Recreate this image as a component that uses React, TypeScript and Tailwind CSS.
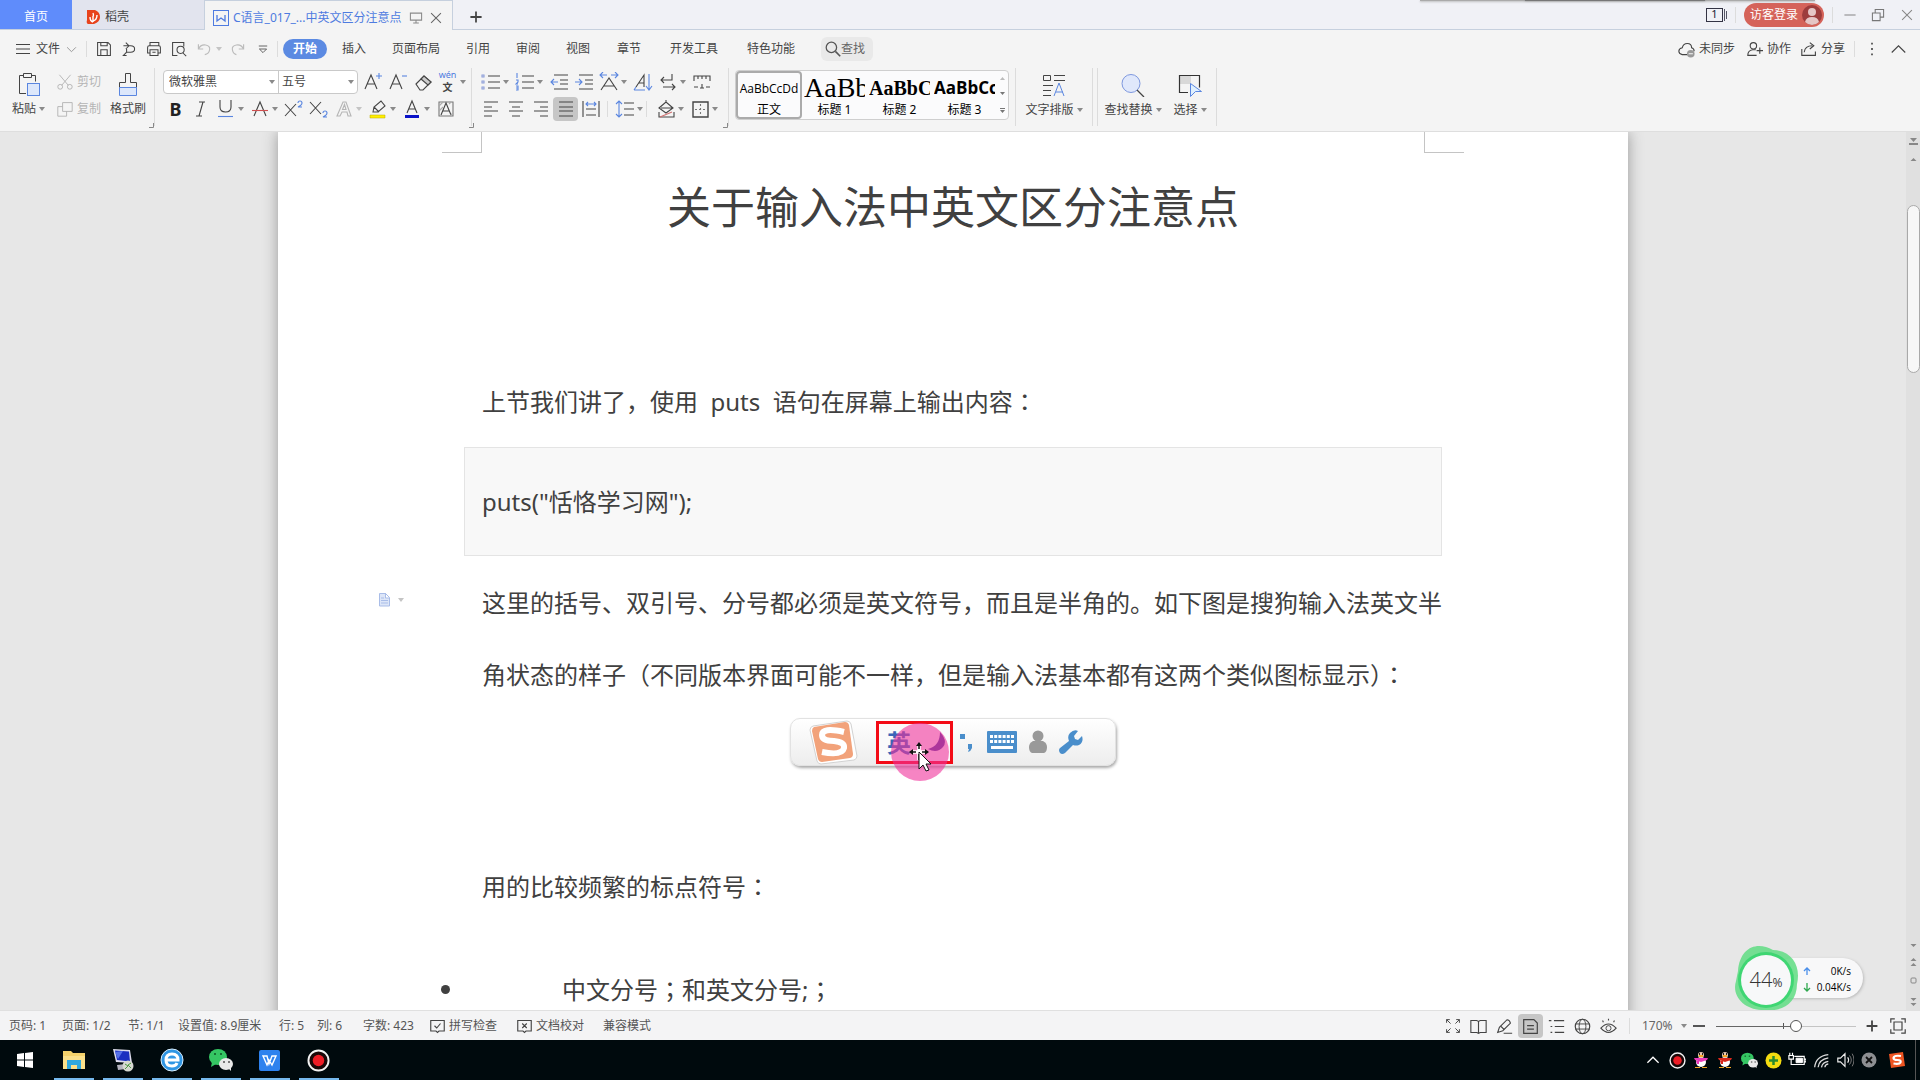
import React from 'react';

interface IconProps {
  children: React.ReactNode;
  size?: number;
  color?: string;
}

// Every line icon is drawn on a 20x20 grid
const Icon = ({ children, size = 20, color = '#444' }: IconProps) => (
  <svg
    width={size}
    height={size}
    viewBox="0 0 20 20"
    fill="none"
    stroke={color}
    strokeWidth="1.1"
    className="shrink-0"
    aria-hidden="true"
  >
    {children}
  </svg>
);

const Caret = ({ light }: { light?: boolean }) => (
  <svg width="6" height="4" viewBox="0 0 6 4" className="shrink-0" aria-hidden="true">
    <path d="M0 0h6L3 4z" fill={light ? '#c4c4c4' : '#8a8a8a'} />
  </svg>
);

interface ToolProps {
  label: string;
  children: React.ReactNode;
  caret?: boolean;
  active?: boolean;
  disabled?: boolean;
}

const Tool = ({ label, children, caret, active, disabled }: ToolProps) => (
  <button
    aria-label={label}
    disabled={disabled}
    className={`flex h-6 shrink-0 items-center ${caret ? 'w-[34px]' : 'w-[25px]'}`}
  >
    <span
      className={`flex h-6 w-[25px] items-center justify-center rounded-sm ${active ? 'bg-[#c6c6c6]' : ''}`}
    >
      {children}
    </span>
    {caret && <Caret light={disabled} />}
  </button>
);

const Divider = ({ tall }: { tall?: boolean }) => (
  <div className={`w-px shrink-0 bg-[#dcdcdc] ${tall ? 'h-[58px]' : 'h-4'}`} />
);

const BLUE = '#5a86e0';

const menus = [
  { name: '插入', width: 'w-[50px]' },
  { name: '页面布局', width: 'w-[74px]' },
  { name: '引用', width: 'w-[50px]' },
  { name: '审阅', width: 'w-[50px]' },
  { name: '视图', width: 'w-[50px]' },
  { name: '章节', width: 'w-[52px]' },
  { name: '开发工具', width: 'w-[78px]' },
  { name: '特色功能', width: 'w-[76px]' },
];

const TabBar = () => (
  <header className="relative flex h-[30px] shrink-0 border-b border-[#c6d0de] bg-[#f0f1f6]">
    <button className="w-[72px] bg-[#5f8cfb] pt-1 text-white">首页</button>
    <button className="flex w-[132px] items-center gap-1 bg-[#e2e4ee] pt-1 pl-[14px]">
      <svg width="15" height="16" viewBox="0 0 15 16" aria-hidden="true">
        <path d="M1 1l8 0q5 2 5 7t-6 7l-6 0q-2-1-1-4z" fill="#e8431c" />
        <path d="M7 13V7M7 13q-3-1-3-5M7 12q4-1 4-6M7 8q1-2 0-4" stroke="#fff" strokeWidth="1.4" fill="none" />
      </svg>
      稻壳
    </button>
    <div className="-mb-px flex w-[249px] items-center border-x border-t border-[#c6d0de] bg-[#f4f4f4] pt-1 pl-[8px] text-[#4e7be0]">
      <svg width="16" height="16" viewBox="0 0 16 16" fill="none" stroke="#4e7be0" aria-hidden="true">
        <rect x="0.5" y="0.5" width="15" height="15" />
        <path d="M4 5v6l4-3 4 3V5" strokeWidth="1.3" />
      </svg>
      <span className="ml-1 w-[170px] whitespace-nowrap">C语言_017_...中英文区分注意点</span>
      <button aria-label="窗口" className="ml-[6px]">
        <Icon size={14} color="#8a8a8a">
          <path d="M2 3h16v10H2zM10 13v4M6 17h8" strokeWidth="1.5" />
        </Icon>
      </button>
      <button aria-label="关闭标签" className="ml-[6px]">
        <Icon size={14} color="#666">
          <path d="M3 3l14 14M17 3L3 17" strokeWidth="1.5" />
        </Icon>
      </button>
    </div>
    <button aria-label="新建标签" className="ml-[15px] pt-1">
      <Icon size={16}>
        <path d="M10 3v14M3 10h14" strokeWidth="2.2" />
      </Icon>
    </button>

    <div className="ml-auto flex items-center">
      <button aria-label="窗口列表" className="mr-2 flex items-center">
        <span className="flex h-[14px] w-[17px] items-center justify-center border border-[#334] text-[11px] text-[#223]">1</span>
        <span className="ml-px h-3 w-px bg-[#556]" />
        <span className="ml-px h-2 w-px bg-[#556]" />
      </button>
      <Divider />
      <button className="mx-2 flex h-6 w-20 items-center justify-between rounded-full bg-[#d5635a] pr-[2px] pl-[6px] text-white">
        访客登录
        <svg width="20" height="20" viewBox="0 0 20 20" aria-hidden="true">
          <circle cx="10" cy="10" r="10" fill="#9c3c3c" />
          <circle cx="10" cy="7" r="4" fill="#e5c5c5" />
          <path d="M3 17q1-5 7-5t7 5q-3 3-7 3t-7-3z" fill="#e5c5c5" />
        </svg>
      </button>
      <Divider />
      <button aria-label="最小化" className="ml-[5px] flex w-6 justify-center">
        <Icon size={14} color="#888"><path d="M2 10h16" strokeWidth="1.5" /></Icon>
      </button>
      <button aria-label="还原" className="flex w-8 justify-center">
        <Icon size={14} color="#777"><path d="M2 7h11v11H2zM6 7V2h12v11h-5" strokeWidth="1.5" /></Icon>
      </button>
      <button aria-label="关闭" className="flex w-[26px] justify-center">
        <Icon size={14} color="#888"><path d="M3 3l14 14M17 3L3 17" strokeWidth="1.5" /></Icon>
      </button>
    </div>
    {/* Edge of the recorder toolbar hanging off the top of the screen */}
    <div className="absolute top-0 right-[105px] h-px w-[395px] bg-[#aaa] shadow-[0_1px_2px_#aaa]" />
    <div className="absolute top-0 right-[215px] h-px w-[180px] bg-[#777] shadow-[0_0_2px_#777]" />
  </header>
);

const MenuBar = () => (
  <nav className="flex h-[38px] shrink-0 items-center">
    <button className="flex w-[86px] items-center gap-[6px] pl-4">
      <svg width="14" height="12" viewBox="0 0 14 12" stroke="#444" aria-hidden="true">
        <path d="M0 1.5h14M0 6h14M0 10.5h14" />
      </svg>
      文件
      <Icon size={11} color="#999"><path d="M2 6l8 8 8-8" strokeWidth="1.8" /></Icon>
    </button>
    <Divider />
    <div className="flex w-[190px] items-center pl-1">
      <Tool label="保存">
        <Icon size={16}><path d="M2 2h13l3 3v13H2zM6 2v4h8V2M6 18v-7h8v7" strokeWidth="1.3" /></Icon>
      </Tool>
      <Tool label="输出">
        <Icon size={16}><path d="M3 6h9q5 0 5 4t-5 4H7M6 2l4 4-4 4M7 10v4l-4 4h4" strokeWidth="1.3" /></Icon>
      </Tool>
      <Tool label="打印">
        <Icon size={16}><path d="M5 6V2h11v4M5 15H2V8q0-2 2-2h12q2 0 2 2v7h-3M5 11h10v7H5zM8 14h4" strokeWidth="1.3" /></Icon>
      </Tool>
      <Tool label="打印预览">
        <Icon size={16}><path d="M8 18H2V2h14v5M15 15l4 4" strokeWidth="1.3" /><circle cx="12" cy="11" r="4.5" strokeWidth="1.3" /></Icon>
      </Tool>
      <Tool label="撤销" caret disabled>
        <Icon size={16} color="#bbb"><path d="M3 4v6h6M3 10q3-6 9-5t5 6-6 6" strokeWidth="1.4" /></Icon>
      </Tool>
      <Tool label="恢复" disabled>
        <Icon size={16} color="#bbb"><path d="M17 4v6h-6M17 10q-3-6-9-5t-5 6 5 6" strokeWidth="1.4" /></Icon>
      </Tool>
      <Tool label="自定义">
        <Icon size={12} color="#555"><path d="M3 5h14M4 10l6 6 6-6z" strokeWidth="1.5" /></Icon>
      </Tool>
    </div>
    <Divider />
    <button className="mr-[2px] ml-[5px] h-5 w-11 rounded-full bg-[#5b8ae2] font-bold text-white">开始</button>
    {menus.map((menu) => (
      <button key={menu.name} className={`shrink-0 ${menu.width}`}>
        {menu.name}
      </button>
    ))}
    <label className="ml-3 flex h-6 w-[52px] items-center rounded-md bg-[#e9e9e9] pl-1">
      <Icon size={16} color="#555"><circle cx="8" cy="8" r="6.5" strokeWidth="1.6" /><path d="M13 13l6 6" strokeWidth="2" /></Icon>
      <input aria-label="查找" placeholder="查找" className="w-7 bg-transparent outline-none placeholder:text-[#666]" />
    </label>

    <div className="ml-auto flex items-center">
      <button className="flex items-center gap-1">
        <Icon size={17}>
          <path d="M11 16H5q-4-1-4-4t4-4q1-5 6-5t5 5q3 1 3 4" strokeWidth="1.3" />
          <circle cx="15" cy="15" r="4.5" fill="#999" stroke="none" />
          <path d="M12.500 15h5" stroke="#fff" />
        </Icon>
        未同步
      </button>
      <button className="ml-3 flex items-center gap-1">
        <Icon size={16}>
          <circle cx="8" cy="6" r="4" strokeWidth="1.4" />
          <path d="M12 18H1q0-6 6-7h4M16 8v8M12 12h8" strokeWidth="1.4" />
        </Icon>
        协作
      </button>
      <button className="ml-[10px] flex items-center gap-1">
        <Icon size={16}><path d="M1 10v8h17v-5M4 14q1-8 10-8M11 2l5 4-5 4" strokeWidth="1.4" /></Icon>
        分享
      </button>
      <span className="ml-[9px]"><Divider /></span>
      <button aria-label="更多" className="ml-2">
        <Icon size={18} color="none">
          <path d="M9 3h2v2H9zM9 9h2v2H9zM9 15h2v2H9z" fill="#555" />
        </Icon>
      </button>
      <button aria-label="折叠功能区" className="mr-[14px] ml-[10px]">
        <Icon size={15}><path d="M1 14l9-9 9 9" strokeWidth="1.5" /></Icon>
      </button>
    </div>
  </nav>
);

const Corner = () => (
  <svg width="5" height="5" viewBox="0 0 5 5" className="shrink-0 self-end" aria-hidden="true">
    <path d="M4.500 0v4.500H0" stroke="#888" fill="none" />
  </svg>
);

const styleSamples = [
  { name: '标题 1', sample: 'AaBb', look: 'font-[Liberation_Serif] text-[28px]' },
  { name: '标题 2', sample: 'AaBbC', look: 'font-[Liberation_Serif] text-[20px] font-bold' },
  { name: '标题 3', sample: 'AaBbCc', look: 'font-[Open_Sans] text-[17px] font-bold' },
];

const Ribbon = () => (
  <div className="flex h-16 shrink-0 items-start border-b border-[#dedede]">
    {/* Clipboard */}
    <div className="flex h-[60px] w-[154px] shrink-0">
      <button className="flex w-[57px] flex-col items-center gap-1 pt-1">
        <svg width="22" height="25" viewBox="0 0 22 25" fill="none" stroke="#444" aria-hidden="true">
          <path d="M8 21.500H1.500V3.500h4M13 3.500h4.500v6M5.500 1.500h8v4h-8z" />
          <rect x="9.500" y="11.500" width="12" height="12" fill="#dce7fb" stroke={BLUE} />
        </svg>
        <span className="flex items-center gap-[3px] leading-4">粘贴<Caret /></span>
      </button>
      <div className="flex w-[50px] flex-col gap-[3px] pt-[2px]">
        <button disabled className="flex h-6 items-center gap-1 text-[#b4b4b4]">
          <Icon size={16} color="#b0b0b0"><circle cx="4" cy="16" r="3" /><circle cx="16" cy="16" r="3" /><path d="M3 1l11 13M17 1L6 14" /></Icon>
          剪切
        </button>
        <button disabled className="flex h-6 items-center gap-1 text-[#b4b4b4]">
          <Icon size={16} color="#b0b0b0"><path d="M7 2h12v11H7zM7 7H1v12h11v-6" /></Icon>
          复制
        </button>
      </div>
      <button className="flex flex-1 flex-col items-center gap-1 pt-1">
        <svg width="20" height="25" viewBox="0 0 20 25" fill="none" stroke="#444" aria-hidden="true">
          <path d="M7.500 1.500h5v9h6v5h-17v-5h6z" />
          <path d="M1.500 15.500h17v8h-17z" fill="#dce7fb" stroke={BLUE} />
        </svg>
        <span className="leading-4">格式刷</span>
      </button>
      <Corner />
    </div>
    <Divider tall />

    {/* Font */}
    <div className="flex h-[60px] w-[316px] shrink-0">
      <div className="flex flex-1 flex-col gap-[3px] pt-[2px] pl-2">
        <div className="flex items-center">
          <div className="mr-[2px] flex h-6 w-[195px] items-center rounded-sm border border-[#c9c9c9] bg-white">
            <select aria-label="字体" className="w-[105px] appearance-none pl-[5px] outline-none">
              <option>微软雅黑</option>
            </select>
            <Caret />
            <select aria-label="字号" className="ml-[3px] h-full w-[70px] appearance-none border-l border-[#c9c9c9] pl-[3px] outline-none">
              <option>五号</option>
            </select>
            <Caret />
          </div>
          <Tool label="增大字号">
            <Icon><path d="M2 17L8 3l6 14M4 12h8" /><path d="M16 1v6M13 4h6" stroke={BLUE} /></Icon>
          </Tool>
          <Tool label="减小字号">
            <Icon><path d="M2 17L8 3l6 14M4 12h8" /><path d="M14 4h5" stroke={BLUE} /></Icon>
          </Tool>
          <Tool label="清除格式">
            <Icon><path d="M3 12l8-8 7 6-8 8H7z" /><path d="M8 7l7 6 3-3-7-6z" fill="#ccc" /></Icon>
          </Tool>
          <Tool label="拼音指南" caret>
            <span className="flex flex-col items-center">
              <span className="text-[9px] leading-[10px] text-[#4e7be0]">wén</span>
              <span className="text-[10px] leading-[14px] font-bold">文</span>
            </span>
          </Tool>
        </div>
        <div className="flex items-center">
          <Tool label="加粗"><span className="text-[18px] leading-6 font-bold text-[#222]">B</span></Tool>
          <Tool label="倾斜"><Icon><path d="M8 3h6M5 17h6M12 3L8 17" /></Icon></Tool>
          <Tool label="下划线" caret>
            <Icon><path d="M4 1v7q0 5 5.500 5T15 8V1" /><path d="M2 17.500h15" stroke={BLUE} /></Icon>
          </Tool>
          <Tool label="删除线" caret>
            <Icon><path d="M4 17l6-14 6 14" /><path d="M2 11.500h16" stroke="#d05050" /></Icon>
          </Tool>
          <Tool label="上标">
            <Icon><path d="M1 5l11 12M12 5L1 17" /><path d="M14 4q0-2 2-2t2 2-4 4h4" stroke={BLUE} /></Icon>
          </Tool>
          <Tool label="下标">
            <Icon><path d="M1 3l11 12M12 3L1 15" /><path d="M14 14q0-2 2-2t2 2-4 4h4" stroke={BLUE} /></Icon>
          </Tool>
          <Tool label="文字效果" caret disabled>
            <Icon color="#b5b5b5"><path d="M3 17L9 3h3l5 14h-3l-1-4H8l-2 4zM8.500 10.500h3.500l-1.500-5z" /></Icon>
          </Tool>
          <Tool label="突出显示" caret>
            <Icon><path d="M5 13l1-5 7-6 4 5-7 6zM6 8l5 5" /><path d="M2 16h15v3H2z" fill="#ffee00" stroke="#bba800" strokeWidth="0.500" /></Icon>
          </Tool>
          <Tool label="字体颜色" caret>
            <Icon><path d="M5 14l5-12 5 12M6.500 10h7" /><path d="M3 16h14v3H3z" fill="#0a12c8" stroke="none" /></Icon>
          </Tool>
          <Tool label="字符底纹">
            <Icon><path d="M3 3h14v14H3z" stroke="#777" /><path d="M5 16l5-12 5 12M7 12h6" /><path d="M3 7l4-4M3 12l4-4M13 5l2-2M14 17l3-3" stroke="#aaa" /></Icon>
          </Tool>
        </div>
      </div>
      <Corner />
    </div>
    <Divider tall />

    {/* Paragraph */}
    <div className="flex h-[60px] w-[256px] shrink-0">
      <div className="flex flex-1 flex-col gap-[3px] pt-[2px] pl-[6px]">
        <div className="flex items-center">
          <Tool label="项目符号" caret>
            <Icon><path d="M7 4h12M7 10h12M7 16h12" /><path d="M1 3h2v2H1zM1 9h2v2H1zM1 15h2v2H1z" stroke="#8a9cd8" /></Icon>
          </Tool>
          <Tool label="编号" caret>
            <Icon><path d="M7 4h12M7 10h12M7 16h12" /><path d="M2 1v5M1 8h2v2l-2 2h2M1 14h2v4H1M1 16h2" stroke={BLUE} /></Icon>
          </Tool>
          <Tool label="减少缩进">
            <Icon><path d="M5 3h14M11 8h8M11 12h8M5 17h14" /><path d="M9 10H2M5 7l-3 3 3 3" stroke={BLUE} /></Icon>
          </Tool>
          <Tool label="增加缩进">
            <Icon><path d="M5 3h14M11 8h8M11 12h8M5 17h14" /><path d="M1 10h7M5 7l3 3-3 3" stroke={BLUE} /></Icon>
          </Tool>
          <Tool label="中文版式" caret>
            <Icon><path d="M2 18l8-12 8 12M5 14h10" /><path d="M8 3H1M4 0L1 3l3 3M12 3h7M16 0l3 3-3 3" stroke={BLUE} /></Icon>
          </Tool>
          <Tool label="排序">
            <Icon><path d="M3 15L11 3v12M6 11h5" /><path d="M1 18h11M16 2v15M13 14l3 4 3-4M3 15l-2 3" stroke={BLUE} /></Icon>
          </Tool>
          <Tool label="显示标记" caret>
            <Icon><path d="M14 2v6H3M6 5L3 8l3 3M5 15h12M14 12l3 3-3 3" /></Icon>
          </Tool>
          <Tool label="制表位">
            <Icon><path d="M2 9V4h16v5M6 4v3M10 4v3M14 4v3M2 15h4M10 12v4M8 16h4M14 15h4" /></Icon>
          </Tool>
        </div>
        <div className="flex items-center">
          <Tool label="左对齐"><Icon><path d="M3 3h14M3 8h8M3 12h14M3 17h8" /></Icon></Tool>
          <Tool label="居中"><Icon><path d="M3 3h14M6 8h8M3 12h14M6 17h8" /></Icon></Tool>
          <Tool label="右对齐"><Icon><path d="M3 3h14M9 8h8M3 12h14M9 17h8" /></Icon></Tool>
          <Tool label="两端对齐" active><Icon><path d="M3 3h14M3 8h14M3 12h14M3 17h14" /></Icon></Tool>
          <Tool label="分散对齐">
            <Icon><path d="M2 2v16M18 2v16M5 10h10M5 16h10" /><path d="M5 5h10M7 3L5 5l2 2M13 3l2 2-2 2" stroke={BLUE} /></Icon>
          </Tool>
          <span className="mx-1"><Divider /></span>
          <Tool label="行距" caret>
            <Icon><path d="M9 4h10M9 10h10M9 16h10" /><path d="M4 2v16M1 5l3-3 3 3M1 15l3 3 3-3" stroke={BLUE} /></Icon>
          </Tool>
          <span className="mr-[6px]"><Divider /></span>
          <Tool label="底纹" caret>
            <Icon><path d="M3 9l7-6 7 6-7 5zM5 9h11M3 13v5h15v-5M10 3V1" /><path d="M4 18L16 13" stroke="#d07070" /></Icon>
          </Tool>
          <Tool label="边框" caret>
            <Icon><path d="M3 3h15v15H3z" strokeWidth="1.400" /><path d="M10.500 5v11M5 10.500h11" strokeDasharray="2 2" stroke="#777" /></Icon>
          </Tool>
        </div>
      </div>
      <Corner />
    </div>
    <Divider tall />

    {/* Styles */}
    <div className="mx-[6px] mt-[2px] flex h-[50px] w-[274px] shrink-0 rounded border border-[#cfcfcf] bg-[#fbfbfc] text-black">
      <button className="flex w-[66px] shrink-0 flex-col items-center overflow-hidden rounded-sm border-2 border-[#ababab]">
        <span className="h-[29px] font-[Open_Sans] text-[12px] leading-[31px]">AaBbCcDd</span>
        <span className="leading-4">正文</span>
      </button>
      {styleSamples.map((s) => (
        <button key={s.name} className="flex w-[65px] shrink-0 flex-col items-center overflow-hidden pt-[2px]">
          <span className={`flex h-[29px] w-[61px] items-center overflow-hidden ${s.look}`}>{s.sample}</span>
          <span className="leading-4">{s.name}</span>
        </button>
      ))}
      <div className="flex flex-1 flex-col items-center justify-around">
        <button aria-label="上一行"><svg width="5" height="3"><path d="M0 3h5L2.500 0z" fill="#bbb" /></svg></button>
        <button aria-label="下一行"><svg width="5" height="3"><path d="M0 0h5L2.500 3z" fill="#777" /></svg></button>
        <button aria-label="更多样式"><svg width="5" height="5"><path d="M0 0h5v1H0zM0 2h5L2.500 5z" fill="#777" /></svg></button>
      </div>
    </div>
    <Divider tall />

    <button className="flex w-[76px] shrink-0 flex-col items-center gap-[5px] pt-[6px]">
      <svg width="24" height="23" viewBox="0 0 24 23" fill="none" stroke="#444" aria-hidden="true">
        <path d="M1.500 1.500h7v5h-7zM12 1.500h11M12 6.500h11M1 11.500h10M1 16.500h8M1 21.500h8" />
        <path d="M12 22l5-13 5 13M14 18h7" stroke={BLUE} />
      </svg>
      <span className="flex items-center gap-[3px] leading-4">文字排版<Caret /></span>
    </button>
    <Divider tall />
    <span className="ml-1"><Divider tall /></span>
    <button className="flex w-[70px] shrink-0 flex-col items-center gap-[5px] pt-[6px]">
      <svg width="24" height="23" viewBox="0 0 24 23" fill="none" aria-hidden="true">
        <circle cx="10" cy="9.500" r="9" fill="#e0e8fb" stroke="#7d97de" />
        <path d="M16 16l7 7" stroke="#444" strokeWidth="1.300" />
      </svg>
      <span className="flex items-center gap-[3px] leading-4">查找替换<Caret /></span>
    </button>
    <button className="flex w-[44px] shrink-0 flex-col items-center gap-[5px] pt-[6px]">
      <svg width="24" height="23" viewBox="0 0 24 23" fill="none" aria-hidden="true">
        <path d="M1 1h12v9H1z" fill="#d8d8d8" />
        <path d="M10 18.500H1.500V1.500h20v12" stroke="#333" strokeWidth="1.200" />
        <path d="M12.500 9.500l11 8h-6l-5 5z" fill="#dff0ff" stroke={BLUE} />
      </svg>
      <span className="flex items-center gap-[3px] leading-4">选择<Caret /></span>
    </button>
    <span className="ml-1"><Divider tall /></span>
  </div>
);

const ImeToolbar = () => (
  <figure className="relative mx-auto mt-2 flex h-12 w-[326px] items-center rounded-[10px] border border-[#e2e2e2] bg-gradient-to-b from-white to-[#ededed] shadow-[1px_2px_3px_#aaa]">
    <svg width="50" height="46" viewBox="0 0 50 46" className="ml-[17px]" aria-hidden="true">
      <path d="M5 7l34-5q3 0 4 3l6 32q0 3-3 4l-33 4q-3 0-4-3L2 11q0-3 3-4z" fill="#fff" stroke="#d2d2d2" />
      <path d="M6 8l31-5q3 0 4 3l4 29q0 3-3 4l-28 4q-3 0-4-3L4 12q0-3 2-4z" fill="#f2a27a" />
      <path d="M36 13q-22-5-22 3 0 6 12 6 11 1 10 7-2 8-22 4" stroke="#fff" strokeWidth="6" fill="none" />
    </svg>
    <div className="ml-[18px] flex h-[43px] w-[77px] items-center gap-4 border-3 border-[#f30b16] bg-[#fafafa] pl-2 text-[24px] font-bold text-[#3a66b8]">
      英
      <svg width="20" height="22" viewBox="0 0 20 22" aria-hidden="true">
        <path d="M13 1q8 9 3 15-6 7-15 2 12-3 12-17z" fill="#4a3c9c" />
      </svg>
    </div>
    <svg width="14" height="22" viewBox="0 0 14 22" className="ml-[7px]" fill="#4a8ecb" aria-hidden="true">
      <path d="M0 3h5v5H0zM8 13h4v4q-1 3-4 4l1-3H8z" />
    </svg>
    <svg width="30" height="22" viewBox="0 0 30 22" className="ml-[13px]" aria-hidden="true">
      <rect width="30" height="22" rx="1" fill="#4a8ecb" />
      <path d="M3 5.500h24M3 10.500h24" stroke="#fff" strokeWidth="3" strokeDasharray="3 1.200" />
      <path d="M4 16.500h22" stroke="#fff" strokeWidth="3" />
    </svg>
    <svg width="18" height="24" viewBox="0 0 18 24" className="ml-3" fill="#999" aria-hidden="true">
      <circle cx="9" cy="6" r="5.500" />
      <path d="M4 11h10q4 2 4 6 0 5-3 6H3q-3-1-3-6 0-4 4-6z" />
    </svg>
    <svg width="24" height="24" viewBox="0 0 24 24" className="ml-3" fill="#4a8ecb" aria-hidden="true">
      <path d="M23 6q2 6-3 9-3 1-6 0l-8 8q-3 2-5 0-2-3 0-5l9-7q-2-5 1-8 4-4 8-2l-4 5 1 3 3 1z" />
    </svg>

    {/* Click halo and mouse pointer */}
    <svg width="58" height="58" viewBox="0 0 58 58" className="absolute top-[4px] left-[100px]" aria-hidden="true">
      <circle cx="29" cy="29" r="29" fill="#f0329b" opacity="0.600" />
      <g stroke="#fff" strokeWidth="3.500" fill="none">
        <path d="M28 21v16M20 29h16" />
      </g>
      <path d="M28 21v5M28 31v6M20 29h5M31 29h6" stroke="#111" strokeWidth="1.500" />
      <path d="M28 19l-3 4h6zM18 29l4-3v6zM38 29l-4-3v6z" fill="#111" />
      <path d="M28 29v17l4-4 3 6 3-1-3-6h5z" fill="#fff" stroke="#111" />
    </svg>
  </figure>
);

// Colons and semicolons sit in the middle of their square
const Mark = ({ children }: { children: string }) => (
  <span className="font-['Noto_Sans_CJK_TC',sans-serif]" lang="zh-TW">{children}</span>
);

const Page = () => (
  <main className="relative mx-auto w-[1350px] bg-white text-[24px] leading-[71px] text-[#404040] shadow-[0_0_14px_#999]">
    {/* Crop marks at the top margin */}
    <div className="flex justify-between px-[164px]">
      <div className="h-[21px] w-[40px] border-r border-b border-[#c4c4c4]" />
      <div className="h-[21px] w-[40px] border-b border-l border-[#c4c4c4]" />
    </div>
    <h1 className="pt-[18px] text-center text-[44px] leading-[72px] font-normal">关于输入法中英文区分注意点</h1>
    <p className="mt-[122px] pl-[204px] whitespace-pre">上节我们讲了，使用  puts  语句在屏幕上输出内容<Mark>：</Mark></p>
    <pre className="mx-[186px] mt-[10px] border border-[#e4e4e4] bg-[#f8f8f8] py-[18px] pl-[17px] font-[inherit]">puts("恬恪学习网");</pre>
    <div className="mt-[11px] flex">
      <button aria-label="粘贴选项" className="ml-[100px] flex w-[104px] items-center gap-[6px] self-start pt-[25px]">
        <svg width="14" height="15" viewBox="0 0 14 15" fill="#dde6f8" stroke="#a9bde8" aria-hidden="true">
          <path d="M1.500 14V1.500h6l4 4V14zM7.500 1v5h4M3 6h3M3 8.500h7M3 11h7" />
        </svg>
        <Caret light />
      </button>
      <p className="whitespace-nowrap">
        这里的括号、双引号、分号都必须是英文符号，而且是半角的。如下图是搜狗输入法英文半
        <br />
        角状态的样子（不同版本界面可能不一样，但是输入法基本都有这两个类似图标显示）<Mark>：</Mark>
      </p>
    </div>
    <ImeToolbar />
    <p className="mt-[84px] pl-[204px]">用的比较频繁的标点符号<Mark>：</Mark></p>
    <ul className="mt-[31px]">
      <li className="flex items-center pl-[163px]">
        <span className="mr-[112px] size-[9px] rounded-full bg-[#404040]" />
        <p>中文分号<Mark>；</Mark>和英文分号;<Mark>；</Mark></p>
      </li>
    </ul>
  </main>
);

const ScrollRail = () => (
  <aside className="flex w-[14px] shrink-0 flex-col items-center bg-[#e0e0e0] pt-[5px]">
    <svg width="9" height="30" viewBox="0 0 9 30" fill="#888" aria-hidden="true">
      <path d="M1 1h7L4.500 5zM0 6h9v2H0zM1.500 24h6l-3-3z" />
    </svg>
    <div className="mt-[38px] h-[168px] w-[13px] rounded-full border border-[#a9a9a9] bg-[#f7f7f7]" />
    <svg width="9" height="70" viewBox="0 0 9 70" fill="#888" className="mt-auto" aria-hidden="true">
      <path d="M1.500 4h6l-3 3zM1.500 21h6l-3-3zM1.500 26h6l-3-3zM1.500 58h6l-3 3zM1.500 63h6l-3 3z" />
      <rect x="2" y="38" width="5" height="5" rx="1" fill="none" stroke="#888" />
    </svg>
  </aside>
);

const SpeedWidget = () => (
  <div className="absolute right-[57px] -bottom-px flex h-[66px] w-[128px] items-center text-black">
    <div className="absolute right-0 flex h-10 w-[90px] flex-col justify-center rounded-full bg-[#f8f8f9] pt-px pr-3 text-right font-[Open_Sans] text-[10px] leading-4 shadow-[1px_1px_3px_#bbb]">
      <span>0K/s</span>
      <span>0.04K/s</span>
    </div>
    <svg width="128" height="66" viewBox="0 0 128 66" className="absolute" fill="none" aria-hidden="true">
      <path d="M3 26C5 2 22-4 38 5c20 1 28 17 24 34 0 20-16 28-32 26C11 66-4 52 1 36z" fill="#5fdc83" opacity="0.850" />
      <circle cx="31" cy="35" r="28" fill="#3fd673" />
      <circle cx="31" cy="35" r="25" fill="#f7f8f9" />
      <path d="M72 30v-7M69 26l3-3 3 3" stroke="#4a8eea" strokeWidth="1.300" />
      <path d="M72 38v8M69 43l3 3 3-3" stroke="#2fa84f" strokeWidth="1.300" />
    </svg>
    <span className="relative w-[62px] pt-1 text-center font-[Open_Sans] text-[20px] font-light text-[#333]">
      44<span className="text-[12px] font-normal">%</span>
    </span>
  </div>
);

const StatusBar = () => (
  <footer className="flex h-[30px] shrink-0 items-center border-t border-[#e0e0e0] bg-[#f4f4f5] pt-px whitespace-nowrap text-[#555]">
    <span className="w-[53px] pl-[9px]">页码: 1</span>
    <span className="w-[66px] pl-[9px]">页面: 1/2</span>
    <span className="w-[50px] pl-[9px]">节: 1/1</span>
    <span className="w-[101px] pl-[9px]">设置值: 8.9厘米</span>
    <span className="w-[38px] pl-[9px]">行: 5</span>
    <span className="w-[46px] pl-[9px]">列: 6</span>
    <span className="w-[76px] pl-[9px]">字数: 423</span>
    <button className="flex w-[87px] items-center gap-1">
      <Icon size={15}><path d="M1 2h18v14h-7l-2 2-2-2H1zM6 9l3 3 5-6" strokeWidth="1.500" /></Icon>
      拼写检查
    </button>
    <button className="flex w-[86px] items-center gap-1">
      <Icon size={15}><path d="M1 2h18v14h-7l-2 2-2-2H1zM7 6l6 6M13 6l-6 6" strokeWidth="1.500" /></Icon>
      文档校对
    </button>
    <span>兼容模式</span>

    <div className="ml-auto flex items-center gap-[1px]">
      <Tool label="全屏"><Icon size={16}><path d="M2 6V2h4M2 2l5 5M14 2h4v4M18 2l-5 5M2 14v4h4M2 18l5-5M18 14v4h-4M18 18l-5-5" strokeWidth="1.200" /></Icon></Tool>
      <Tool label="阅读版式"><Icon size={17}><path d="M1 3h7l2 1 2-1h7v14h-7l-2 1-2-1H1zM10 4v14" strokeWidth="1.300" /></Icon></Tool>
      <Tool label="写作模式"><Icon size={17}><path d="M2 17l2-6 9-9q3 0 4 4l-9 9zM6 10l4 4M9 18h10" strokeWidth="1.300" /></Icon></Tool>
      <Tool label="页面视图" active><Icon size={17}><path d="M2 2h12l4 4v12H2zM6 9h8M6 13h8" strokeWidth="1.400" /></Icon></Tool>
      <Tool label="大纲"><Icon size={17}><path d="M1 3h3M7 3h12M3 10h2M8 10h11M3 17h2M8 17h11" strokeWidth="1.400" /></Icon></Tool>
      <Tool label="Web版式"><Icon size={17}><circle cx="10" cy="10" r="8.500" strokeWidth="1.400" /><ellipse cx="10" cy="10" rx="4" ry="8.500" /><path d="M2 7h16M2 13h16" /></Icon></Tool>
      <Tool label="护眼模式"><Icon size={17}><path d="M1 12q9-10 18 0-9 10-18 0zM10 3V1M4 5L3 3M16 5l1-2" strokeWidth="1.300" /><circle cx="10" cy="12" r="3" /></Icon></Tool>
    </div>
    <span className="ml-2"><Divider /></span>
    <button className="ml-3 flex w-[48px] items-center gap-2 text-[#666]">170%<Caret /></button>
    <button aria-label="缩小" className="flex w-[18px] justify-center"><Icon size={12}><path d="M0 10h20" strokeWidth="3" /></Icon></button>
    <div className="relative ml-2 flex w-[140px] items-center">
      <span className="absolute left-[67px] h-[6px] w-px bg-[#555]" />
      <input
        type="range"
        aria-label="缩放比例"
        min={0}
        max={100}
        defaultValue={58}
        className="relative h-3 w-full appearance-none bg-[linear-gradient(90deg,#666_55%,#c4c4c4_55%)] bg-[length:100%_1px] bg-center bg-no-repeat [&::-webkit-slider-thumb]:size-3 [&::-webkit-slider-thumb]:appearance-none [&::-webkit-slider-thumb]:rounded-full [&::-webkit-slider-thumb]:border [&::-webkit-slider-thumb]:border-[#555] [&::-webkit-slider-thumb]:bg-white"
      />
    </div>
    <button aria-label="放大" className="ml-2 flex w-4 justify-center"><Icon size={12}><path d="M1 10h18M10 1v18" strokeWidth="3" /></Icon></button>
    <button aria-label="适合页面" className="mr-[14px] ml-[10px] flex w-4 justify-center">
      <Icon size={16}><path d="M1 6V1h5M14 1h5v5M19 14v5h-5M6 19H1v-5M5 5h10v10H5z" strokeWidth="1.500" /></Icon>
    </button>
  </footer>
);

const WeChat = ({ size }: { size: number }) => (
  <svg width={size} height={size} viewBox="0 0 24 24" aria-hidden="true">
    <ellipse cx="9" cy="9" rx="9" ry="8" fill="#35c663" />
    <path d="M3 14l-1 5 5-3z" fill="#35c663" />
    <ellipse cx="17" cy="16" rx="7" ry="6" fill="#e9e9e9" />
    <path d="M19 20l3 3v-5z" fill="#e9e9e9" />
    <path d="M5 5h2v2H5zM11 5h2v2h-2z" fill="#176f33" />
    <path d="M14 13h2v2h-2zM19 13h2v2h-2z" fill="#777" />
  </svg>
);

const Recorder = ({ size }: { size: number }) => (
  <svg width={size} height={size} viewBox="0 0 24 24" aria-hidden="true">
    <circle cx="12" cy="12" r="10.500" fill="#1a0808" stroke="#f2f2f2" strokeWidth="2" />
    <circle cx="12" cy="12" r="6" fill="#ee1c25" />
  </svg>
);

const Penguin = ({ scarf }: { scarf: string }) => (
  <svg width="16" height="18" viewBox="0 0 16 18" aria-hidden="true">
    <ellipse cx="8" cy="11" rx="5" ry="5" fill="#fff" />
    <circle cx="8" cy="4" r="3" fill="#e8c8b0" />
    <path d="M6 4h4v2H6zM2 16h5v1H2zM9 16h5v1H9z" fill="#f5a623" />
    <path d="M6 2h1v2H6zM9 2h1v2H9z" fill="#222" />
    <path d="M1 7h14l-1 2-6 2-6-2zM3 10h3v3H4z" fill={scarf} />
  </svg>
);

const taskApps = [
  {
    name: '文件资源管理器',
    icon: (
      <svg width="22" height="20" viewBox="0 0 22 20">
        <path d="M0 1h8l2 2h12v16H0z" fill="#f5d26b" />
        <path d="M0 6h22v13H0z" fill="#fbe08a" />
        <path d="M4 19v-9h14v9h-4v-4H8v4z" fill="#2fa8e0" />
      </svg>
    ),
  },
  {
    name: '远程桌面',
    icon: (
      <svg width="24" height="24" viewBox="0 0 24 24">
        <path d="M2 1l17 1 2 13L5 14z" fill="#dcdcec" />
        <path d="M4 2.500l14 1 1 10L6 12z" fill="#1b2fc0" />
        <path d="M4 4l8-1-5 8z" fill="#5570e8" />
        <path d="M6 17l9-1v5l-8 1z" fill="#b5b5c0" />
        <circle cx="17" cy="18" r="5.500" fill="#d5d8d0" />
        <path d="M14 16l3 2-3 3M20 15l-3 2 3 3" stroke="#4c9a44" fill="none" />
      </svg>
    ),
  },
  {
    name: '浏览器',
    icon: (
      <svg width="24" height="24" viewBox="0 0 24 24">
        <circle cx="12" cy="12" r="11" fill="#2f96e4" stroke="#d9efff" />
        <path d="M7 12h11q0-6-6-6t-6 6 6 6q4 0 5-3" stroke="#fff" strokeWidth="3" fill="none" />
      </svg>
    ),
  },
  { name: '微信', icon: <WeChat size={24} /> },
  {
    name: 'WPS',
    icon: (
      <svg width="21" height="21" viewBox="0 0 21 21">
        <rect width="21" height="21" rx="2" fill="#2e82ee" />
        <path d="M4 6h4l2 8 3-8h4l-4 9-3-5-2 5z" fill="none" stroke="#fff" strokeWidth="1.400" />
      </svg>
    ),
  },
  { name: '录屏', icon: <Recorder size={23} /> },
];

const trayIcons = [
  <Icon size={14} color="#fff"><path d="M2 14l8-8 8 8" strokeWidth="1.800" /></Icon>,
  <Recorder size={17} />,
  <Penguin scarf="#e838b8" />,
  <Penguin scarf="#d8281c" />,
  <WeChat size={17} />,
  <svg width="17" height="17" viewBox="0 0 17 17"><circle cx="8.500" cy="8.500" r="8" fill="#f4dc10" /><path d="M8.500 4v9M4 8.500h9" stroke="#2b8a2e" strokeWidth="2.500" /></svg>,
  <Icon size={18} color="#fff"><path d="M7 6h11v9H5M18 9h2v3h-2M2 2v3M5 2v3M1 5h5v4H1zM3.500 9v6H7" strokeWidth="1.300" /><path d="M9 8h7v5H9z" fill="#fff" /></Icon>,
  <Icon size={17} color="#ddd"><path d="M2 18Q3 5 18 3M6 18q1-9 12-11M10 18q1-6 8-7M14 18q0-3 4-4" strokeWidth="1.500" /></Icon>,
  <Icon size={18} color="#eee"><path d="M2 8h3l5-5v14l-5-5H2zM13 7q2 3 0 6" strokeWidth="1.300" /><path d="M15 5q4 5 0 10M18 3q4 7 0 14" stroke="#777" /></Icon>,
  <svg width="16" height="16" viewBox="0 0 16 16"><circle cx="8" cy="8" r="7.500" fill="#8d8f92" /><path d="M5 5l6 6M11 5l-6 6" stroke="#111" strokeWidth="1.800" /></svg>,
];

const Taskbar = () => (
  <div className="flex h-10 shrink-0 bg-[#000a0d]">
    <button aria-label="开始菜单" className="flex w-[49px] items-center justify-center">
      <svg width="16" height="16" viewBox="0 0 16 16" fill="#fff" aria-hidden="true">
        <path d="M0 2l7-1v6.500H0zM8 1l8-1v7.500H8zM0 8.500h7V15l-7-1zM8 8.500h8V16l-8-1z" />
      </svg>
    </button>
    {taskApps.map((app) => (
      <button key={app.name} aria-label={app.name} className="flex w-[49px] flex-col items-center">
        <span className="flex h-[38px] items-center pt-[2px]">{app.icon}</span>
        <span className="h-[2px] w-10 bg-[#76b9ed]" />
      </button>
    ))}
    <div className="ml-auto flex items-center">
      {trayIcons.map((icon, idx) => (
        <span key={idx} className="flex w-6 justify-center">{icon}</span>
      ))}
      <span className="ml-[7px] flex w-[18px] justify-center">
        <svg width="16" height="16" viewBox="0 0 16 16" aria-hidden="true">
          <path d="M0 2l14-2 2 14-14 2z" fill="#ee5522" />
          <path d="M12 4Q5 3 4.500 6q0 2 4 2t3 2.500q-1 2-7 1" stroke="#fff" strokeWidth="2.200" fill="none" />
        </svg>
      </span>
    </div>
    <div className="mr-1 ml-[9px] w-px bg-[#555]" />
  </div>
);

const App = () => (
  <div className="flex h-screen flex-col overflow-hidden bg-[#f4f4f4] font-['Noto_Sans','Noto_Sans_CJK_SC',sans-serif] text-[12px] text-[#444]">
    <TabBar />
    <MenuBar />
    <Ribbon />
    <div className="relative flex min-h-0 flex-1 overflow-hidden bg-[#e7e7e7]">
      <div className="min-w-0 flex-1 overflow-hidden">
        <Page />
      </div>
      <ScrollRail />
      <SpeedWidget />
    </div>
    <StatusBar />
    <Taskbar />
  </div>
);

export default App;
